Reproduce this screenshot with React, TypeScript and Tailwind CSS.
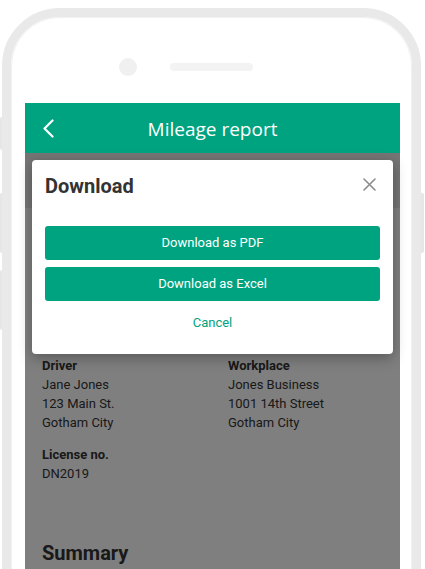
import React from "react";

const GREEN = "bg-[#00a37f]";

function Chevron() {
  return (
    <svg width="12" height="19" viewBox="0 0 12 19" fill="none">
      <polyline points="10.5,1.5 2.5,9.5 10.5,17.5" stroke="white" strokeWidth="2.2" strokeLinecap="round" strokeLinejoin="round" />
    </svg>
  );
}

function CloseX() {
  return (
    <svg width="13" height="13" viewBox="0 0 13 13" fill="none">
      <path d="M1 1 L12 12 M12 1 L1 12" stroke="#8c8c8c" strokeWidth="1.6" strokeLinecap="round" />
    </svg>
  );
}

export default function App() {
  return (
    <div className="relative w-[425px] h-[569px] overflow-hidden bg-white" style={{ fontFamily: "Roboto, 'Liberation Sans', sans-serif" }}>
      {/* side buttons */}
      <div className="absolute left-0 top-[117px] w-[5px] h-[33px] rounded-l-[2px] bg-[#e6e6e6]" />
      <div className="absolute left-0 top-[193px] w-[5px] h-[60px] rounded-l-[2px] bg-[#e6e6e6]" />
      <div className="absolute left-0 top-[270px] w-[5px] h-[60px] rounded-l-[2px] bg-[#e6e6e6]" />
      <div className="absolute right-[1px] top-[193px] w-[5px] h-[60px] rounded-r-[2px] bg-[#e6e6e6]" />

      {/* phone */}
      <div className="relative ml-[2px] mt-[8px] w-[419px] h-[820px] rounded-[58px] border-[9px] border-[#e9e9e9] bg-white">
        <div className="h-full w-full rounded-[49px] border border-[#f1f1f1]">
          {/* camera + speaker */}
          <div className="flex items-center h-[85px] pt-[40px] items-start">
            <div className="ml-[107px] w-[18px] h-[18px] rounded-full bg-[#f0f0f0]" />
            <div className="ml-[33px] mt-[5px] w-[83px] h-[8px] rounded-full bg-[#f3f3f3]" />
          </div>

          {/* screen */}
          <div className="ml-[13px] w-[375px] flex flex-col">
            <div className={`${GREEN} h-[50px] grid grid-cols-[50px_1fr_50px] items-center`}>
              <div className="pl-[17px] pt-[1px] flex items-center">
                <Chevron />
              </div>
              <div className="text-center text-white text-[19px] pt-[2px]" style={{ fontFamily: "'Open Sans', sans-serif" }}>
                Mileage report
              </div>
              <div />
            </div>

            <div className="relative h-[700px] bg-white">
              <div className="h-[55px] bg-[#ebebeb]" />
              <div className="pt-[148px] pl-[17px] text-[13px] leading-[19px] text-[#333]">
                <div className="grid grid-cols-[186px_1fr]">
                  <div>
                    <div className="font-bold">Driver</div>
                    <div>Jane Jones</div>
                    <div>123 Main St.</div>
                    <div>Gotham City</div>
                  </div>
                  <div>
                    <div className="font-bold">Workplace</div>
                    <div>Jones Business</div>
                    <div>1001 14th Street</div>
                    <div>Gotham City</div>
                  </div>
                </div>
                <div className="mt-[13px]">
                  <div className="font-bold">License no.</div>
                  <div>DN2019</div>
                </div>
                <div className="mt-[56px] text-[20px] leading-[28px] font-bold">Summary</div>
              </div>

              {/* overlay */}
              <div className="absolute inset-0 bg-black/50">
                <div className="mx-[7px] mt-[7px] rounded-[4px] bg-white px-[13px] pt-[12px] pb-[21px] shadow-[0_4px_14px_rgba(0,0,0,0.3)]">
                  <div className="flex justify-between items-start">
                    <div className="text-[20px] leading-[28px] font-bold text-[#333]">Download</div>
                    <div className="mt-[6px] mr-[4px]">
                      <CloseX />
                    </div>
                  </div>
                  <button className={`mt-[26px] w-full h-[34px] rounded-[3px] ${GREEN} text-white text-[13px] flex items-center justify-center`}>
                    Download as PDF
                  </button>
                  <button className={`mt-[7px] w-full h-[34px] rounded-[3px] ${GREEN} text-white text-[13px] flex items-center justify-center`}>
                    Download as Excel
                  </button>
                  <div className="mt-[12px] text-center text-[13px] leading-[20px] text-[#00a37f]">Cancel</div>
                </div>
              </div>
            </div>
          </div>
        </div>
      </div>
    </div>
  );
}
